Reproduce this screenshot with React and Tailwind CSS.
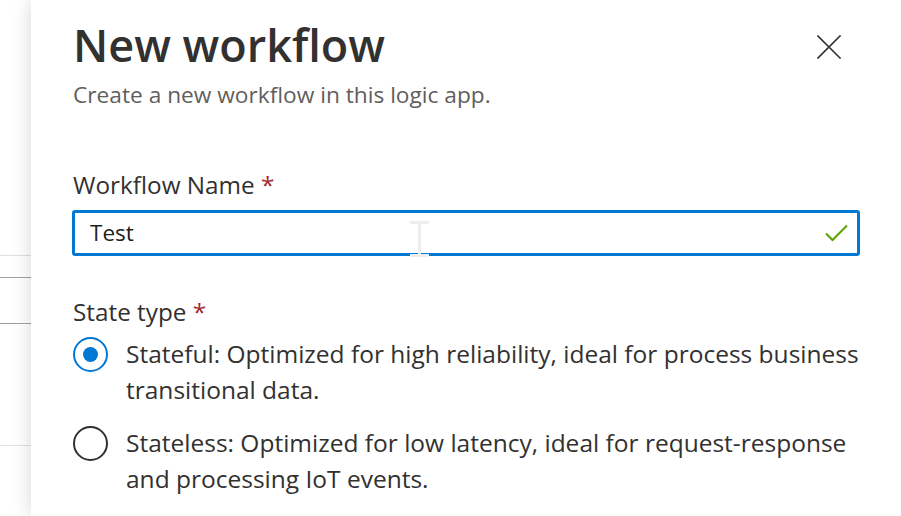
import { useState } from 'react';

function CloseIcon() {
  return (
    <svg width="24" height="24" viewBox="0 0 24 24" fill="none" stroke="#323130" strokeWidth="1.6" strokeLinecap="square">
      <path d="M1 1 L23 23 M23 1 L1 23" />
    </svg>
  );
}

function CheckIcon() {
  return (
    <svg width="23" height="18" viewBox="0 0 23 18" fill="none" stroke="#57a300" strokeWidth="2">
      <path d="M1 9.5 L7.5 16 L22 1.5" />
    </svg>
  );
}

function Radio({ checked, onClick, children }) {
  return (
    <div className="flex items-start gap-[18px] cursor-pointer" onClick={onClick}>
      <div
        className={`mt-[1px] w-[35px] h-[35px] shrink-0 rounded-full border-2 flex items-center justify-center ${
          checked ? 'border-[#0078d4]' : 'border-[#323130]'
        }`}
      >
        {checked && <div className="w-[15px] h-[15px] rounded-full bg-[#0078d4]" />}
      </div>
      <p className="flex-1 text-[24.5px] leading-[36px] text-[#323130] whitespace-nowrap">{children}</p>
    </div>
  );
}

export default function App() {
  const [state, setState] = useState('stateful');

  return (
    <div className="flex w-[901px] h-[516px] overflow-hidden bg-white font-['Open_Sans','Noto_Sans',sans-serif]">
      {/* Page behind the panel */}
      <div className="w-[31px] shrink-0 flex flex-col bg-white">
        <div className="h-[255px]" />
        <div className="h-px bg-[#e1dfdd]" />
        <div className="h-[21px]" />
        <div className="h-px bg-[#a19f9d]" />
        <div className="h-[45px]" />
        <div className="h-px bg-[#a19f9d]" />
        <div className="h-[121px]" />
        <div className="h-px bg-[#e1dfdd]" />
      </div>

      {/* Panel */}
      <div className="relative flex-1 bg-white shadow-[0_0_18px_rgba(0,0,0,0.16)] pl-[42px] pr-[41px] pt-[19px]">
        <div className="flex items-start justify-between">
          <h1 className="text-[45px] leading-[52px] font-semibold text-[#323130]">New workflow</h1>
          <button className="mt-[16px] mr-[19px]">
            <CloseIcon />
          </button>
        </div>
        <p className="mt-[10px] text-[22.7px] leading-[28px] text-[#605e5c]">Create a new workflow in this logic app.</p>

        <label className="block mt-[62px] text-[24.3px] leading-[28px] text-[#323130]">
          Workflow Name <span className="text-[#a4262c]">*</span>
        </label>
        <div className="relative mt-[11px] -ml-px h-[46px] flex items-center border-[3px] border-[#0078d4] rounded-[3px] pl-[15px] pr-[9px]">
          <span className="flex-1 text-[22.5px] text-[#201f1e]">Test</span>
          <CheckIcon />
          {/* mouse I-beam */}
          <svg className="absolute left-[335px] top-[8px] pointer-events-none" width="20" height="36" viewBox="0 0 20 36" fill="#eeeeee">
            <rect x="0" y="0" width="19" height="3" />
            <rect x="8" y="0" width="3" height="36" />
            <rect x="0" y="33" width="19" height="3" />
          </svg>
        </div>

        <label className="block mt-[42px] text-[24.3px] leading-[28px] text-[#323130]">
          State type <span className="text-[#a4262c]">*</span>
        </label>
        <div className="mt-[10px] flex flex-col gap-[17px]">
          <Radio checked={state === 'stateful'} onClick={() => setState('stateful')}>
            Stateful: Optimized for high reliability, ideal for process business
            <br />
            transitional data.
          </Radio>
          <Radio checked={state === 'stateless'} onClick={() => setState('stateless')}>
            Stateless: Optimized for low latency, ideal for request-response
            <br />
            and processing IoT events.
          </Radio>
        </div>
      </div>
    </div>
  );
}
